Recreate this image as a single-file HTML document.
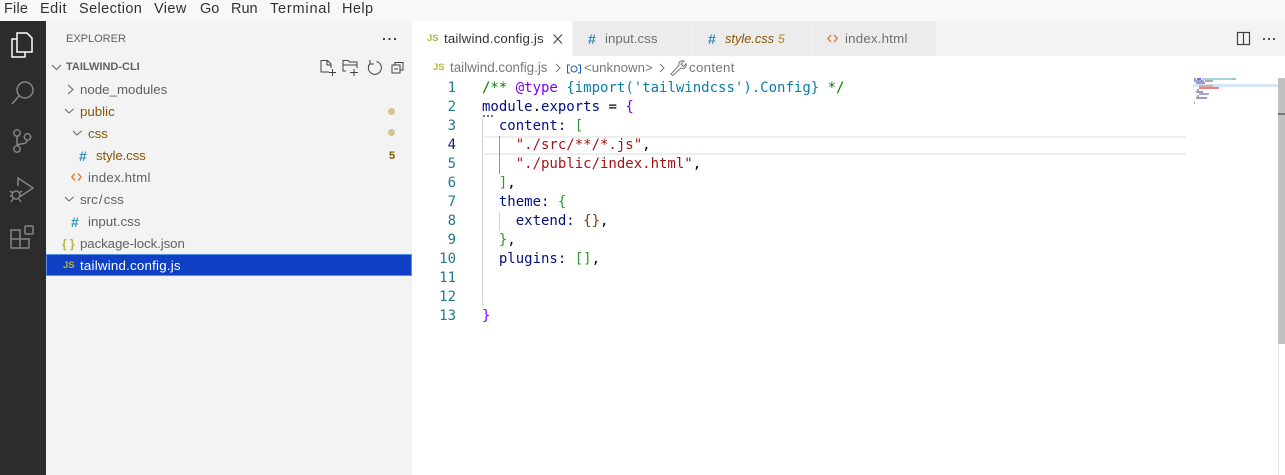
<!DOCTYPE html>
<html><head><meta charset="utf-8">
<style>
html,body{margin:0;padding:0;width:1285px;height:475px;overflow:hidden;background:#fff;font-family:"Liberation Sans",sans-serif}
.a{position:absolute;white-space:pre}
.m{top:1px;font-size:14.5px;line-height:17px;color:#333;letter-spacing:.2px}
.t{position:absolute;font-size:13.3px;line-height:22px;color:#616161;white-space:pre}
.c{font-family:"DejaVu Sans Mono","Liberation Mono",monospace;font-size:14px;line-height:19px;position:absolute;left:482px;white-space:pre;color:#000;z-index:3}
.n{font-family:"DejaVu Sans Mono","Liberation Mono",monospace;font-size:14px;line-height:19px;position:absolute;left:420px;width:36px;text-align:right;color:#237893;z-index:3}
.h{color:#2f8fb5;font-weight:bold;font-family:"Liberation Sans",sans-serif;font-size:14px}
svg{position:absolute;overflow:visible}
.k{color:#001080}.s{color:#a31515}.g{color:#008000}.b{color:#0000ff}.p{color:#7b00ff}.o{color:#319331}.y{color:#7b3814}.q{color:#0a7fa5}
</style></head><body>
<div class="a" style="left:0;top:0;width:1285px;height:21px;background:#f8f8f8"></div>
<span class="a m" style="left:4px">File</span><span class="a m" style="left:40px;letter-spacing:.5px">Edit</span><span class="a m" style="left:79px;letter-spacing:.4px">Selection</span><span class="a m" style="left:154px;letter-spacing:.4px">View</span><span class="a m" style="left:200px;letter-spacing:0">Go</span><span class="a m" style="left:231px;letter-spacing:0">Run</span><span class="a m" style="left:270px;letter-spacing:.8px">Terminal</span><span class="a m" style="left:342px;letter-spacing:.4px">Help</span>

<div class="a" style="left:0;top:21px;width:46px;height:454px;background:#2c2c2c"></div>
<svg style="left:0;top:21px" width="46" height="240" fill="none" stroke-width="1.5">
<path d="M17 18H12V36H25V31M17 31V12H27L32 17V31Z" stroke="#fff"/>
<circle cx="25" cy="69" r="8" stroke="#858585"/><path d="M19 75L12 83" stroke="#858585"/>
<circle cx="17" cy="112" r="3.2" stroke="#858585"/><circle cx="27.500" cy="116" r="3.2" stroke="#858585"/><circle cx="17" cy="128" r="3.200" stroke="#858585"/><path d="M17 115V125M17 124C21 122 27 124 27 119" stroke="#858585"/>
<path d="M18 165V157L33 167L21 175" stroke="#858585"/><circle cx="16" cy="174" r="4" stroke="#858585"/><path d="M10 170L13 172M22 170L19 172M10 175H12M20 175H22M11 181L13 178M21 181L19 178" stroke="#858585"/>
<path d="M11 209H20V227H11ZM11 218H29V227H20" stroke="#858585"/><rect x="25" y="205" width="8" height="8" rx="1" stroke="#858585"/>
</svg>

<div class="a" style="left:46px;top:21px;width:366px;height:454px;background:#f3f3f3"></div>
<span class="a" style="left:66px;top:31px;font-size:11px;line-height:16px;color:#616161">EXPLORER</span>
<svg style="left:0;top:0" width="420" height="60"><rect x="383" y="38" width="2" height="2" fill="#424242"/><rect x="388.500" y="38" width="2" height="2" fill="#424242"/><rect x="394" y="38" width="2" height="2" fill="#424242"/></svg>

<svg style="left:0;top:0" width="420" height="280" fill="none" stroke="#616161" stroke-width="1">
<path d="M52 65L56.500 69.500L61 65"/>
<path d="M68 85L73 89.500L68 94"/>
<path d="M65 109L69 113L73.500 109"/>
<path d="M73 131L77 135L81.500 131"/>
<path d="M65 197L69 201L73.500 197"/>
</svg>
<svg style="left:0;top:0" width="420" height="80" fill="none" stroke="#424242" stroke-width="1">
<path d="M329 72H321V60.500H327.500L331 64V68M327 60.500V65H331M329 72.500H336M332.500 69V76" />
<path d="M346 71H343V60.500H348L349.500 62H357V68M343 65H357M350 72.500H358M354 69V76" />
<path d="M370 63.500A6.500 6.500 0 1 0 376.500 61.500M370 60V64H374" stroke="#424242"/>
<path d="M395 65V62.500H403V70H400.500M392 65H400V73H392ZM394 69H398"/>
</svg>
<span class="a" style="left:66px;top:59px;font-size:11px;line-height:16px;font-weight:bold;color:#616161">TAILWIND-CLI</span>

<span class="t" style="left:80px;top:79px">node_modules</span>
<span class="t" style="left:80px;top:101px;color:#895503">public</span>
<span class="t" style="left:88px;top:123px;color:#895503">css</span>
<span class="a h" style="left:79px;top:145px;line-height:22px">#</span><span class="t" style="left:96px;top:145px;color:#895503;letter-spacing:-.15px">style.css</span>
<span class="a" style="left:389px;top:145px;font-size:11px;line-height:22px;font-weight:bold;color:#895503">5</span>
<svg style="left:0;top:0" width="100" height="190" fill="none" stroke="#e37933" stroke-width="1.300"><path d="M75 173.500L71.800 177L75 180.500M78 173.500L81.200 177L78 180.500"/></svg>
<span class="t" style="left:88px;top:167px;letter-spacing:.2px">index.html</span>
<span class="t" style="left:80px;top:189px;word-spacing:-2.500px">src / css</span>
<span class="a h" style="left:71px;top:211px;line-height:22px">#</span><span class="t" style="left:88px;top:211px">input.css</span>
<span class="a" style="left:62px;top:233px;font-size:12px;line-height:22px;font-weight:bold;color:#b7b73b">{ }</span><span class="t" style="left:80px;top:233px;letter-spacing:-.1px">package-lock.json</span>
<div class="a" style="left:46px;top:254px;width:364px;height:20px;background:#0f3fc4;border:1px solid #5a8fe8"></div>
<span class="a" style="left:63px;top:255px;font-size:9.500px;line-height:22px;font-weight:bold;color:#b7b73b">JS</span><span class="t" style="left:80px;top:255px;color:#fff;letter-spacing:.22px">tailwind.config.js</span>
<div class="a" style="left:388px;top:108px;width:7px;height:7px;border-radius:50%;background:#d0c690"></div>
<div class="a" style="left:388px;top:129px;width:7px;height:7px;border-radius:50%;background:#d0c690"></div>

<div class="a" style="left:412px;top:21px;width:873px;height:35px;background:#f3f3f3"></div>
<div class="a" style="left:412px;top:21px;width:160px;height:35px;background:#fff"></div>
<div class="a" style="left:573px;top:21px;width:119px;height:35px;background:#ececec"></div>
<div class="a" style="left:693px;top:21px;width:119px;height:35px;background:#ececec"></div>
<div class="a" style="left:813px;top:21px;width:123px;height:35px;background:#ececec"></div>
<span class="a" style="left:427px;top:31px;font-size:9.500px;line-height:16px;font-weight:bold;color:#b7b73b">JS</span>
<span class="a" style="left:444px;top:31px;font-size:13.3px;line-height:16px;color:#333;letter-spacing:.17px">tailwind.config.js</span>
<svg style="left:0;top:0" width="600" height="60" fill="none" stroke="#424242" stroke-width="1.100"><path d="M553.500 34.500L562 43.500M562 34.500L553.500 43.500"/></svg>
<span class="a h" style="left:588px;top:31px;line-height:16px">#</span><span class="a" style="left:605px;top:31px;font-size:13.3px;line-height:16px;color:#6f6f6f">input.css</span>
<span class="a h" style="left:708px;top:31px;line-height:16px">#</span><span class="a" style="left:725px;top:31px;font-size:12.800px;line-height:16px;font-style:italic;color:#895503">style.css</span><span class="a" style="left:778px;top:31px;font-size:12px;line-height:16px;font-style:italic;color:#a5822e">5</span>
<svg style="left:0;top:0" width="860" height="60" fill="none" stroke="#e37933" stroke-width="1.300"><path d="M831 35L827.800 38.500L831 42M834 35L837.200 38.500L834 42"/></svg>
<span class="a" style="left:845px;top:31px;font-size:13.3px;line-height:16px;color:#6f6f6f;letter-spacing:.2px">index.html</span>
<svg style="left:0;top:0" width="1285" height="60" fill="none"><rect x="1237.500" y="32.500" width="12" height="12" stroke="#424242" stroke-width="1.200"/><path d="M1243.500 32.500V44.500" stroke="#424242" stroke-width="1.200"/><rect x="1263" y="38" width="2" height="2" fill="#555"/><rect x="1268" y="38" width="2" height="2" fill="#555"/><rect x="1273" y="38" width="2" height="2" fill="#555"/></svg>

<span class="a" style="left:433px;top:60px;font-size:9.500px;line-height:16px;font-weight:bold;color:#b7b73b">JS</span>
<span class="a" style="left:450px;top:60px;font-size:13.400px;line-height:16px;color:#777">tailwind.config.js</span>
<span class="a" style="left:584px;top:60px;font-size:13.300px;line-height:16px;color:#777">&lt;unknown&gt;</span>
<span class="a" style="left:689px;top:60px;font-size:13.300px;line-height:16px;color:#777;letter-spacing:.3px">content</span>
<svg style="left:0;top:0" width="720" height="80" fill="none" stroke="#777" stroke-width="1"><path d="M556 64L560 68L556 72M660 64L664 68L660 72"/>
<path d="M570 65H567.500V73H570M578 65H580.500V73H578" stroke="#1a5fb4"/><circle cx="574" cy="69" r="3" stroke="#1a5fb4"/>
<path d="M671 74L679 65.500C678 62 681 60 684 61L681 64L683.500 66.500L686 63.500C687 67 684 69.500 681 68L673 75.500Z"/></svg>

<span class="n" style="top:79px">1</span><span class="n" style="top:98px">2</span><span class="n" style="top:117px">3</span><span class="n" style="top:136px;color:#0b216f">4</span><span class="n" style="top:155px">5</span><span class="n" style="top:174px">6</span><span class="n" style="top:193px">7</span><span class="n" style="top:212px">8</span><span class="n" style="top:231px">9</span><span class="n" style="top:250px">10</span><span class="n" style="top:269px">11</span><span class="n" style="top:288px">12</span><span class="n" style="top:307px">13</span>

<div class="a" style="left:484px;top:136px;width:702px;height:15px;border-top:2px solid #eee;border-bottom:2px solid #eee"></div>
<div class="a" style="left:482px;top:117px;width:1px;height:189px;background:#d3d3d3"></div>
<div class="a" style="left:499px;top:136px;width:1px;height:38px;background:#939393"></div>
<div class="a" style="left:499px;top:212px;width:1px;height:19px;background:#d3d3d3"></div>
<div class="a" style="left:483px;top:115px;width:10px;height:2px;background-image:repeating-linear-gradient(90deg,#777 0 2px,transparent 2px 4px)"></div>

<span class="c" style="top:79px"><span class="g">/** </span><span class="p">@type</span><span class="g"> </span><span class="q">{import('tailwindcss').Config}</span><span class="g"> */</span></span>
<span class="c" style="top:98px"><span class="k">module</span>.<span class="k">exports</span> = <span class="p">{</span></span>
<span class="c" style="top:117px">  <span class="k">content</span><span class="k">:</span> <span class="o">[</span></span>
<span class="c" style="top:136px">    <span class="s">"./src/**/*.js"</span>,</span>
<span class="c" style="top:155px">    <span class="s">"./public/index.html"</span>,</span>
<span class="c" style="top:174px">  <span class="o">]</span>,</span>
<span class="c" style="top:193px">  <span class="k">theme</span><span class="k">:</span> <span class="o">{</span></span>
<span class="c" style="top:212px">    <span class="k">extend</span><span class="k">:</span> <span class="y">{}</span>,</span>
<span class="c" style="top:231px">  <span class="o">}</span>,</span>
<span class="c" style="top:250px">  <span class="k">plugins</span><span class="k">:</span> <span class="o">[]</span>,</span>
<span class="c" style="top:307px"><span class="p">}</span></span>

<div class="a" style="left:1193px;top:84px;width:85px;height:3px;background:#d6e6f8"></div>
<svg style="left:0;top:0" width="1285" height="120" shape-rendering="crispEdges">
<rect x="1194" y="78" width="2" height="2" fill="#7ac08a"/><rect x="1197" y="78" width="4" height="2" fill="#8a5cff"/><rect x="1202" y="78" width="30" height="2" fill="#a8d4e0"/><rect x="1232" y="78" width="4" height="2" fill="#9ad0a8"/>
<rect x="1194" y="80" width="10" height="2" fill="#9aa8c8"/><rect x="1205" y="80" width="8" height="2" fill="#aaa"/>
<rect x="1196" y="82" width="9" height="2" fill="#9a9ac8"/>
<rect x="1199" y="85" width="14" height="2" fill="#e0a8a8"/>
<rect x="1199" y="87" width="20" height="2" fill="#e88080"/>
<rect x="1197" y="89" width="2" height="2" fill="#aaa"/>
<rect x="1196" y="91" width="7" height="2" fill="#9a9ac8"/>
<rect x="1199" y="93" width="10" height="2" fill="#a8a8c8"/>
<rect x="1197" y="95" width="2" height="2" fill="#aaa"/>
<rect x="1196" y="97" width="11" height="2" fill="#9a9ac8"/>
<rect x="1194" y="102" width="1" height="2" fill="#999"/>
</svg>
<div class="a" style="left:1278px;top:78px;width:7px;height:266px;background:#c1c1c1"></div>
<div class="a" style="left:1278px;top:113px;width:7px;height:2px;background:#777"></div>
<div class="a" style="left:1278px;top:344px;width:1px;height:131px;background:#e8e8e8"></div>
</body></html>
